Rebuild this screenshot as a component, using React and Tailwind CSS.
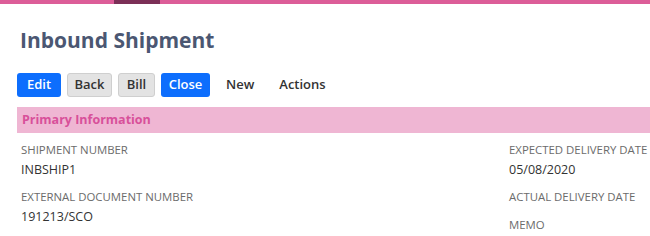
import React from 'react';

const font = { fontFamily: '"Open Sans", "Noto Sans", sans-serif' };

const Field = ({ label, value, className = '' }) => (
  <div className={className}>
    <div className="text-[11.4px] leading-[14px] text-[#6b6b6b] uppercase">{label}</div>
    {value && <div className="text-[12.5px] leading-[16px] text-[#333] mt-[5px]">{value}</div>}
  </div>
);

const App = () => {
  return (
    <div className="w-[650px] h-[236px] bg-white overflow-hidden" style={font}>
      {/* top bar */}
      <div className="flex h-[4px] bg-[#dc5d98]">
        <div className="w-[114px]" />
        <div className="w-[46px] bg-[#7b2f57]" />
      </div>

      <h1 className="ml-[20px] mt-[22px] text-[21px] leading-[28px] font-bold text-[#4b5772]">Inbound Shipment</h1>

      <div className="flex items-center ml-[17px] mt-[19px] text-[13px] font-semibold">
        <button className="h-[24px] w-[44px] rounded-[3px] bg-[#0d6efd] text-white">Edit</button>
        <button className="h-[24px] w-[45px] ml-[6px] rounded-[3px] bg-[#e3e3e3] border border-[#cfcfcf] text-[#333]">Back</button>
        <button className="h-[24px] w-[37px] ml-[6px] rounded-[3px] bg-[#e3e3e3] border border-[#cfcfcf] text-[#333]">Bill</button>
        <button className="h-[24px] w-[49px] ml-[6px] rounded-[3px] bg-[#0d6efd] text-white">Close</button>
        <button className="h-[24px] ml-[16px] text-[#333]">New</button>
        <button className="h-[24px] ml-[25px] text-[#333]">Actions</button>
      </div>

      <div className="ml-[17px] mt-[10px] h-[26px] bg-[#efb6d3] flex items-center pl-[5px]">
        <span className="text-[12.5px] font-bold text-[#d8509a]">Primary Information</span>
      </div>

      <div className="flex ml-[21px] mt-[10px]">
        <div className="w-[488px] flex flex-col gap-[12px]">
          <Field label="Shipment Number" value="INBSHIP1" />
          <Field label="External Document Number" value="191213/SCO" />
        </div>
        <div className="flex flex-col gap-[12px] whitespace-nowrap">
          <Field label="Expected Delivery Date" value="05/08/2020" />
          <Field label="Actual Delivery Date" />
          <Field label="Memo" className="mt-[2px]" />
        </div>
      </div>
    </div>
  );
};

export default App;
